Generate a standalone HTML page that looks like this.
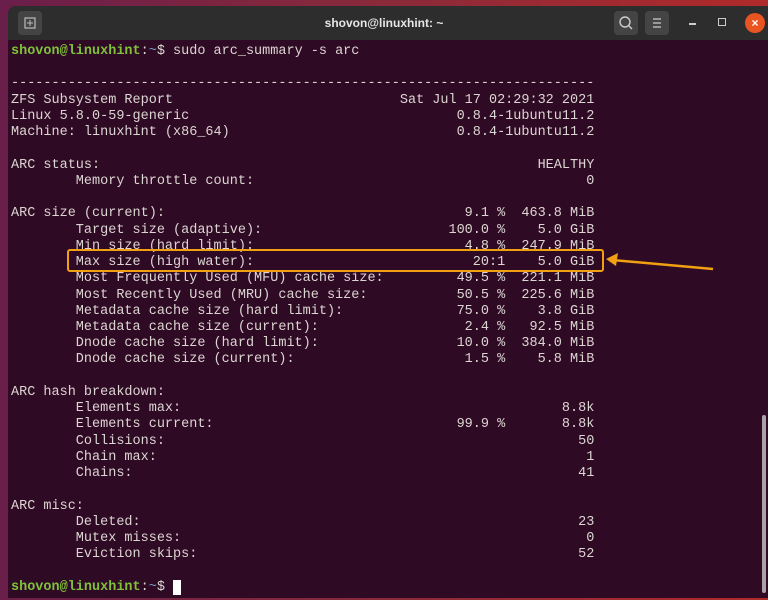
<!DOCTYPE html>
<html><head><meta charset="utf-8"><style>
html,body{margin:0;padding:0;width:768px;height:600px;overflow:hidden;background:#5a1a3a;}
.bg{position:absolute;left:0;top:0;width:768px;height:600px;background:linear-gradient(90deg,#6a1e4a 0%,#8a2a3a 50%,#b02a2a 100%);}
.win{position:absolute;left:8px;top:6px;width:770px;height:592px;background:#2f0a24;border-radius:8px 8px 0 0;overflow:hidden;}
.title{position:absolute;left:0;top:0;width:100%;height:34px;background:#2d2d2d;color:#e6e6e6;font:bold 12px "Liberation Sans",sans-serif;}
.title .t{position:absolute;left:0;width:752px;text-align:center;top:10px;}
.btn{position:absolute;top:5px;width:24px;height:24px;background:#444;border-radius:4px;}
pre{position:absolute;left:3px;top:38px;margin:0;font:13.5px/16.24px "Liberation Mono",monospace;color:#dcd6d2;}
.g{color:#7fc23a;font-weight:bold}.b{color:#7498c8}
.box{position:absolute;left:59px;top:243px;width:533px;height:19px;border:2px solid #f0a010;border-radius:3px;}
.sb{position:absolute;left:754px;top:409px;width:4px;height:178px;background:#a9a3a8;border-radius:2px;}
</style></head><body>
<div class="bg"></div>
<div class="win">
<div class="title">
<div class="btn" style="left:10px"><svg width="24" height="24"><rect x="7" y="7" width="10" height="10" fill="none" stroke="#bbb" stroke-width="1.2"/><path d="M12 9v6M9 12h6" stroke="#bbb" stroke-width="1"/></svg></div>
<div class="t">shovon@linuxhint: ~</div>
<div class="btn" style="left:606px"><svg width="24" height="24"><circle cx="11" cy="11" r="5" fill="none" stroke="#ccc" stroke-width="1.4"/><path d="M15 15l3 3" stroke="#ccc" stroke-width="1.4"/></svg></div>
<div class="btn" style="left:637px"><svg width="24" height="24"><path d="M8 8h8M8 12h8M8 16h8" stroke="#ccc" stroke-width="1.2"/></svg></div>
<div style="position:absolute;left:681px;top:17px;width:7px;height:2px;background:#ccc"></div>
<div style="position:absolute;left:710px;top:12px;width:6px;height:6px;border:1.3px solid #ccc"></div>
<div style="position:absolute;left:737px;top:7px;width:20px;height:20px;border-radius:50%;background:#e95420;color:#fff;font:bold 12px 'Liberation Sans',sans-serif;text-align:center;line-height:20px">×</div>
</div>
<pre><span class="g">shovon@linuxhint</span>:<span class="b">~</span>$ sudo arc_summary -s arc

------------------------------------------------------------------------
ZFS Subsystem Report                            Sat Jul 17 02:29:32 2021
Linux 5.8.0-59-generic                                 0.8.4-1ubuntu11.2
Machine: linuxhint (x86_64)                            0.8.4-1ubuntu11.2

ARC status:                                                      HEALTHY
        Memory throttle count:                                         0

ARC size (current):                                     9.1 %  463.8 MiB
        Target size (adaptive):                       100.0 %    5.0 GiB
        Min size (hard limit):                          4.8 %  247.9 MiB
        Max size (high water):                           20:1    5.0 GiB
        Most Frequently Used (MFU) cache size:         49.5 %  221.1 MiB
        Most Recently Used (MRU) cache size:           50.5 %  225.6 MiB
        Metadata cache size (hard limit):              75.0 %    3.8 GiB
        Metadata cache size (current):                  2.4 %   92.5 MiB
        Dnode cache size (hard limit):                 10.0 %  384.0 MiB
        Dnode cache size (current):                     1.5 %    5.8 MiB

ARC hash breakdown:
        Elements max:                                               8.8k
        Elements current:                              99.9 %       8.8k
        Collisions:                                                   50
        Chain max:                                                     1
        Chains:                                                       41

ARC misc:
        Deleted:                                                      23
        Mutex misses:                                                  0
        Eviction skips:                                               52

<span class="g">shovon@linuxhint</span>:<span class="b">~</span>$ <span style="background:#fff">&nbsp;</span></pre>
<div class="box"></div>
<div class="sb"></div>
</div>
<svg style="position:absolute;left:0;top:0" width="768" height="600"><path d="M713 269L612 260" stroke="#f0a010" stroke-width="2.5" fill="none"/><path d="M606 259l12-6-2 13z" fill="#f0a010"/></svg>
</body></html>
